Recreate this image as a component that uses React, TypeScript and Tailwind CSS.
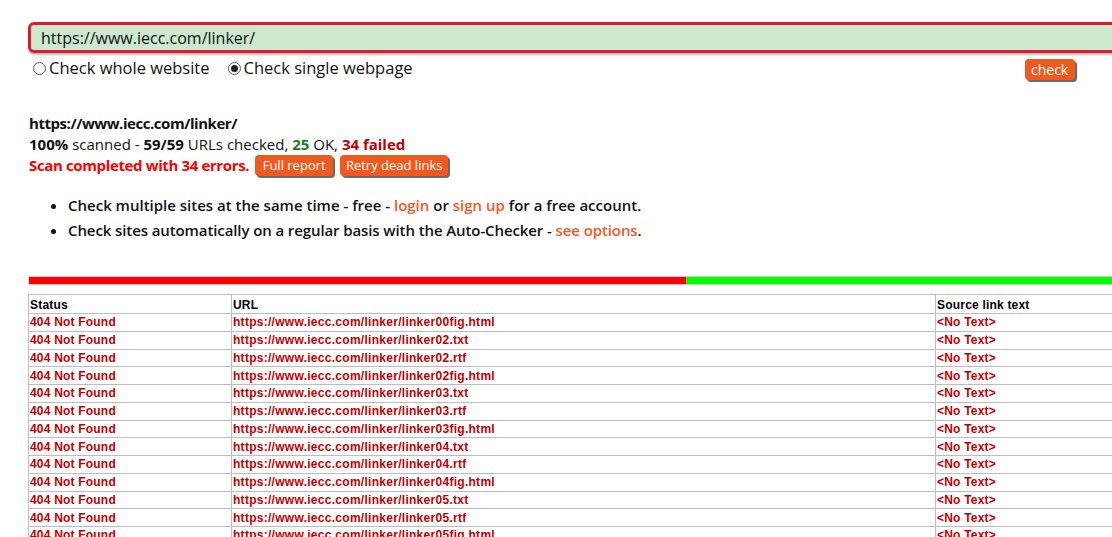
import React from "react";

const rows = [
  "linker00fig.html",
  "linker02.txt",
  "linker02.rtf",
  "linker02fig.html",
  "linker03.txt",
  "linker03.rtf",
  "linker03fig.html",
  "linker04.txt",
  "linker04.rtf",
  "linker04fig.html",
  "linker05.txt",
  "linker05.rtf",
  "linker05fig.html",
];

function Btn({ children, cls }: { children: React.ReactNode; cls: string }) {
  return (
    <span
      className={
        "inline-flex items-center justify-center rounded-[4px] bg-[#f05a1e] text-white shadow-[2px_2px_0_#6b6b6b] " +
        cls
      }
    >
      {children}
    </span>
  );
}

export default function App() {
  return (
    <div className="w-[1112px] h-[537px] overflow-hidden bg-white font-['Open_Sans',sans-serif] text-[#111]">
      <div className="pl-[28px] pt-[22px] w-[1240px]">
        <div className="h-[31px] w-[1120px] rounded-[6px] border-[3px] border-[#d4202a] bg-[#cde8cf] shadow-[0_2px_2px_#bbb] flex items-center pl-[10px] text-[16px] leading-none">
          https://www.iecc.com/linker/
        </div>
        <div className="flex items-start h-[36px]">
          <label className="flex items-center mt-[4px] text-[16.5px] leading-[22px]">
            <span className="w-[13px] h-[13px] rounded-full border border-[#555] bg-white ml-[5px] mr-[3px]" />
            Check whole website
          </label>
          <label className="flex items-center mt-[4px] ml-[18px] text-[16.5px] leading-[22px]">
            <span className="w-[13px] h-[13px] rounded-full border border-[#555] bg-white mr-[3px] flex items-center justify-center">
              <span className="w-[7px] h-[7px] rounded-full bg-[#222]" />
            </span>
            Check single webpage
          </label>
          <div className="ml-[612px] mt-[4px]">
            <Btn cls="w-[50px] h-[21px] text-[14px]">check</Btn>
          </div>
        </div>

        <div className="mt-[24px] pl-[1px] text-[15px] leading-[21px]">
          <div className="font-bold tracking-[-0.45px]">https://www.iecc.com/linker/</div>
          <div>
            <b>100%</b> scanned - <b>59/59</b> URLs checked,{" "}
            <b className="text-[#1a7a1a]">25</b> OK, <b className="text-[#c00000]">34 failed</b>
          </div>
          <div className="flex items-center">
            <b className="text-[#f00] tracking-[-0.37px]">Scan completed with 34 errors.</b>
            <Btn cls="ml-[6px] w-[78px] h-[21px] text-[13px]">Full report</Btn>
            <Btn cls="ml-[7px] w-[108px] h-[21px] text-[13px]">Retry dead links</Btn>
          </div>
        </div>

        <ul className="mt-[17px] ml-[26px] text-[15px] leading-[25px] font-semibold list-disc pl-[14px]">
          <li>
            Check multiple sites at the same time - free - <span className="text-[#f2592a]">login</span> or{" "}
            <span className="text-[#f2592a]">sign up</span> for a free account.
          </li>
          <li className="tracking-[-0.1px]">
            Check sites automatically on a regular basis with the Auto-Checker -{" "}
            <span className="text-[#f2592a]">see options</span>.
          </li>
        </ul>

        <div className="mt-[33px] w-[1120px] h-[9px] border border-[#ccc] flex">
          <div className="w-[657px] bg-[#ff0000]" />
          <div className="flex-1 bg-[#00ff00]" />
        </div>

        <table className="mt-[9px] w-[1180px] border-collapse font-['Liberation_Sans',sans-serif] text-[12px] font-bold table-fixed tracking-[0.2px]">
          <colgroup>
            <col className="w-[203px]" />
            <col className="w-[704px]" />
            <col />
          </colgroup>
          <thead>
            <tr className="h-[19px] text-black">
              <td className="border border-[#bdbdbd] px-[1px] pt-[2px] leading-[14px]">Status</td>
              <td className="border border-[#bdbdbd] px-[1px] pt-[2px] leading-[14px]">URL</td>
              <td className="border border-[#bdbdbd] px-[1px] pt-[2px] leading-[14px]">Source link text</td>
            </tr>
          </thead>
          <tbody className="text-[#c00000]">
            {rows.map((r) => (
              <tr key={r} className="h-[17.75px]">
                <td className="border border-[#bdbdbd] px-[1px] py-0 leading-[14px]">404 Not Found</td>
                <td className="border border-[#bdbdbd] px-[1px] py-0 leading-[14px] tracking-[0.28px]">
                  https://www.iecc.com/linker/{r}
                </td>
                <td className="border border-[#bdbdbd] px-[1px] py-0 leading-[14px]">&lt;No Text&gt;</td>
              </tr>
            ))}
          </tbody>
        </table>
      </div>
    </div>
  );
}
